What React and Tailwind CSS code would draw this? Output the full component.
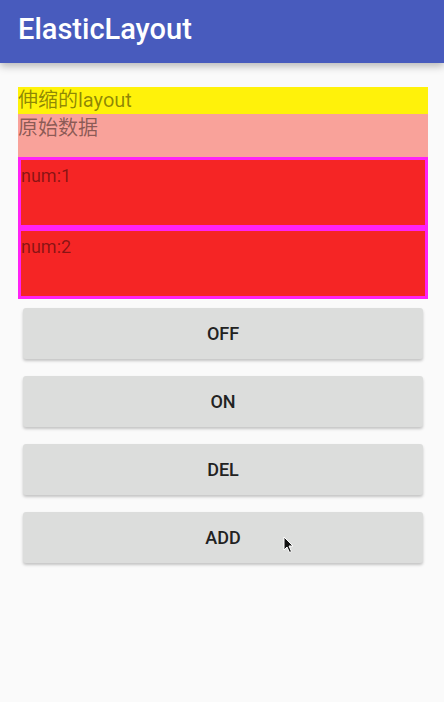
const BUTTONS = ["OFF", "ON", "DEL", "ADD"];
const ITEMS = ["num:1", "num:2"];

function Cursor() {
  return (
    <svg
      className="pointer-events-none absolute left-[283px] top-[536px]"
      width="12"
      height="18"
      viewBox="0 0 12 18"
    >
      <path
        d="M1 1 L1 14 L4 11 L6.5 16.5 L8.5 15.5 L6 10 L10 10 Z"
        fill="#111"
        stroke="#fff"
        strokeWidth="1"
        strokeLinejoin="round"
      />
    </svg>
  );
}

export default function App() {
  return (
    <div className="relative min-h-[702px] w-full bg-[#fafafa] font-['Roboto','Noto_Sans_CJK_SC',sans-serif]">
      {/* toolbar */}
      <div className="relative z-10 flex h-[63px] items-center bg-[#485bbd] pl-[18px] shadow-[0_3px_8px_rgba(0,0,0,0.28)]">
        <h1 className="mt-[-4px] text-[29px] font-medium text-white">ElasticLayout</h1>
      </div>

      <div className="pl-[18px] pr-[16px] pt-[24px]">
        <div className="h-[27px] bg-[#fff20a] text-[20px] leading-[27px] text-black/45">
          伸缩的layout
        </div>
        <div className="h-[43px] bg-[#f9a29a] text-[20px] leading-[28px] text-black/45">
          原始数据
        </div>
        {ITEMS.map((t) => (
          <div
            key={t}
            className="h-[71px] border-[3px] border-[#ff22f5] bg-[#f52525] pt-[4px] text-[18px] leading-[24px] text-black/45"
          >
            {t}
          </div>
        ))}

        <div className="flex flex-col gap-[17px] px-[5px] pt-[9px]">
          {BUTTONS.map((b) => (
            <button
              key={b}
              type="button"
              className="h-[51px] w-full rounded-[3px] bg-[#dcdddc] text-[18px] font-medium text-[#222] shadow-[0_2px_3px_rgba(0,0,0,0.22)]"
            >
              {b}
            </button>
          ))}
        </div>
      </div>
      <Cursor />
    </div>
  );
}
